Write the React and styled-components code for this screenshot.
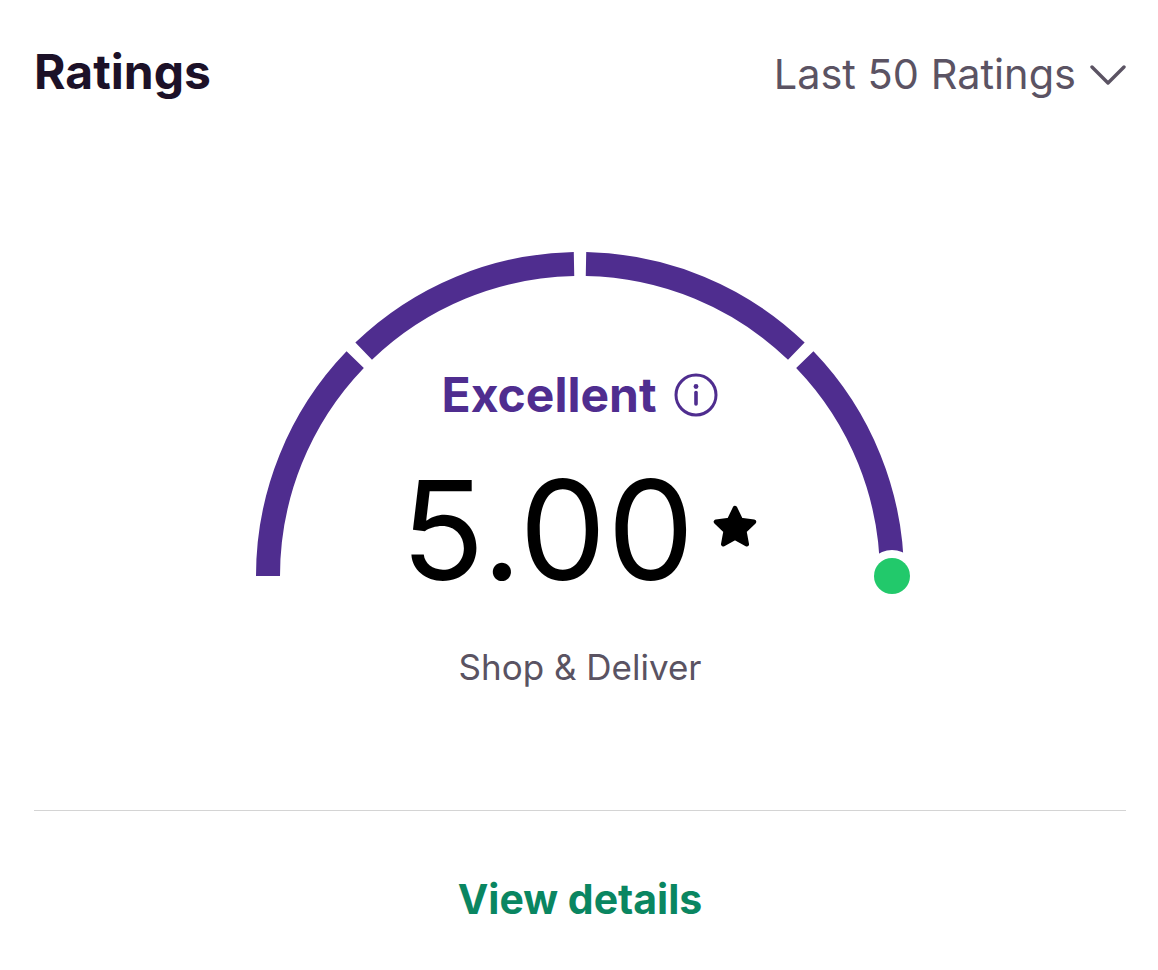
import React from "react";
import styled, { createGlobalStyle } from "styled-components";

const GlobalStyle = createGlobalStyle`
  html, body {
    margin: 0;
    padding: 0;
    background: #ffffff;
  }
  body {
    font-family: Inter, "Noto Sans", sans-serif;
    -webkit-font-smoothing: antialiased;
  }
`;

const PURPLE = "#4f2d8f";
const GREEN = "#22c96b";

const Card = styled.main`
  width: 1158px;
  box-sizing: border-box;
  padding: 48px 32px 40px 34px;
  display: flex;
  flex-direction: column;
`;

const Header = styled.header`
  display: flex;
  justify-content: space-between;
  align-items: baseline;
`;

const Title = styled.h1`
  margin: 0;
  font-size: 48px;
  line-height: 1;
  font-weight: 700;
  color: #1c1128;
`;

const RangeButton = styled.button`
  display: inline-flex;
  align-items: center;
  gap: 14px;
  border: 0;
  background: none;
  padding: 0;
  font-family: inherit;
  font-size: 41.5px;
  line-height: 1;
  color: #5b5363;
  cursor: pointer;
`;

const Gauge = styled.section`
  position: relative;
  margin-top: 149px;
  padding-top: 126px;
  display: flex;
  flex-direction: column;
  align-items: center;
`;

const Dial = styled.svg`
  position: absolute;
  top: 0;
  left: 50%;
  transform: translateX(-50%);
  pointer-events: none;
  z-index: 0;
`;

const Row = styled.div`
  position: relative;
  z-index: 1;
  display: inline-flex;
  align-items: center;
  gap: ${(p) => p.$gap}px;
  margin-top: ${(p) => p.$top || 0}px;
`;

const Status = styled.span`
  font-size: 48px;
  line-height: 1;
  font-weight: 700;
  color: ${PURPLE};
`;

const Score = styled.span`
  font-size: 138px;
  line-height: 1;
  font-weight: 400;
  color: #000;
  letter-spacing: 1px;
`;

const StarMark = styled.svg`
  margin-bottom: 6px;
`;

const Label = styled.div`
  position: relative;
  z-index: 1;
  margin-top: 51px;
  font-size: 35px;
  line-height: 1;
  color: #5a5362;
`;

const Divider = styled.hr`
  margin: 125px 0 0;
  border: 0;
  height: 1px;
  background: #d4d4d4;
`;

const DetailsLink = styled.a`
  align-self: center;
  margin-top: 68px;
  font-size: 41px;
  line-height: 1;
  font-weight: 700;
  color: #0a8661;
  text-decoration: none;
  cursor: pointer;
`;

// Dial geometry (local SVG coordinates)
const W = 660;
const H = 360;
const CX = 330;
const CY = 331;
const R = 312;
const STROKE = 24;
const GAP = 1.1;

const pt = (r, deg) => {
  const a = (deg * Math.PI) / 180;
  return [CX + r * Math.cos(a), CY - r * Math.sin(a)];
};

const arc = (from, to) => {
  const [x0, y0] = pt(R, from);
  const [x1, y1] = pt(R, to);
  return `M ${x0.toFixed(2)} ${y0.toFixed(2)} A ${R} ${R} 0 0 1 ${x1.toFixed(2)} ${y1.toFixed(2)}`;
};

const segments = [
  [180, 135 + GAP],
  [135 - GAP, 90 + GAP],
  [90 - GAP, 45 + GAP],
  [45 - GAP, 0],
];

const starPoints = (() => {
  const pts = [];
  for (let k = 0; k < 10; k++) {
    const r = k % 2 === 0 ? 20 : 9.8;
    const a = ((-90 + 36 * k) * Math.PI) / 180;
    pts.push(`${(24 + r * Math.cos(a)).toFixed(2)},${(25 + r * Math.sin(a)).toFixed(2)}`);
  }
  return pts.join(" ");
})();

function Chevron() {
  return (
    <svg width="36" height="22" viewBox="0 0 36 22" fill="none">
      <path
        d="M2 3 L18 19 L34 3"
        stroke="currentColor"
        strokeWidth="3.4"
        strokeLinecap="round"
        strokeLinejoin="round"
      />
    </svg>
  );
}

function InfoIcon() {
  return (
    <svg width="44" height="44" viewBox="0 0 44 44" fill="none">
      <circle cx="22" cy="22" r="20" stroke={PURPLE} strokeWidth="3" />
      <circle cx="22" cy="13.5" r="2.4" fill={PURPLE} />
      <path d="M22 19.5 V31" stroke={PURPLE} strokeWidth="3.6" strokeLinecap="round" />
    </svg>
  );
}

function Star() {
  return (
    <StarMark width="48" height="48" viewBox="0 0 48 48">
      <polygon
        points={starPoints}
        fill="#000"
        stroke="#000"
        strokeWidth="4.5"
        strokeLinejoin="round"
      />
    </StarMark>
  );
}

export default function App() {
  const [dx, dy] = pt(R, 0);
  return (
    <>
      <GlobalStyle />
      <Card>
        <Header>
          <Title>Ratings</Title>
          <RangeButton type="button">
            Last 50 Ratings
            <Chevron />
          </RangeButton>
        </Header>

        <Gauge>
          <Dial width={W} height={H} viewBox={`0 0 ${W} ${H}`}>
            {segments.map(([a, b]) => (
              <path
                key={a}
                d={arc(a, b)}
                fill="none"
                stroke={PURPLE}
                strokeWidth={STROKE}
              />
            ))}
            <circle cx={dx} cy={dy} r="26" fill="#fff" />
            <circle cx={dx} cy={dy} r="18" fill={GREEN} />
          </Dial>

          <Row $gap={18}>
            <Status>Excellent</Status>
            <InfoIcon />
          </Row>
          <Row $gap={16} $top={42}>
            <Score>5.00</Score>
            <Star />
          </Row>
          <Label>Shop &amp; Deliver</Label>
        </Gauge>

        <Divider />
        <DetailsLink>View details</DetailsLink>
      </Card>
    </>
  );
}
